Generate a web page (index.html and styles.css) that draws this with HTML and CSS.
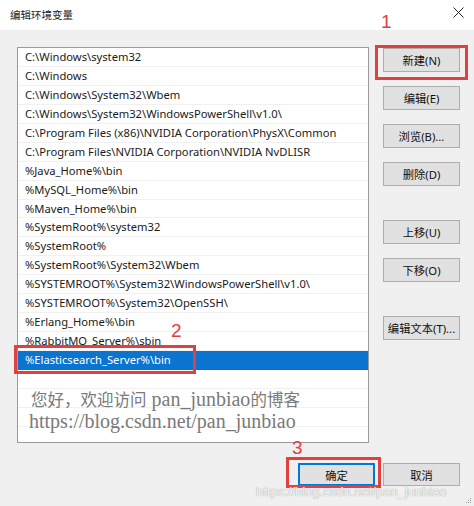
FILE: index.html
```html
<!DOCTYPE html>
<html lang="zh-CN">
<head>
<meta charset="utf-8">
<title>编辑环境变量</title>
<link rel="stylesheet" href="styles.css">
</head>
<body>
<div class="window">
  <div class="titlebar">
    <span class="title">编辑环境变量</span>
    <svg class="close" width="11" height="11" viewBox="0 0 11 11"><path d="M0.5 0.5L10.5 10.5M10.5 0.5L0.5 10.5" stroke="#222" stroke-width="1" fill="none"/></svg>
  </div>
  <div class="content">
    <div class="list">
      <div class="row">C:\Windows\system32</div>
      <div class="row">C:\Windows</div>
      <div class="row">C:\Windows\System32\Wbem</div>
      <div class="row">C:\Windows\System32\WindowsPowerShell\v1.0\</div>
      <div class="row">C:\Program Files (x86)\NVIDIA Corporation\PhysX\Common</div>
      <div class="row">C:\Program Files\NVIDIA Corporation\NVIDIA NvDLISR</div>
      <div class="row">%Java_Home%\bin</div>
      <div class="row">%MySQL_Home%\bin</div>
      <div class="row">%Maven_Home%\bin</div>
      <div class="row">%SystemRoot%\system32</div>
      <div class="row">%SystemRoot%</div>
      <div class="row">%SystemRoot%\System32\Wbem</div>
      <div class="row">%SYSTEMROOT%\System32\WindowsPowerShell\v1.0\</div>
      <div class="row">%SYSTEMROOT%\System32\OpenSSH\</div>
      <div class="row">%Erlang_Home%\bin</div>
      <div class="row">%RabbitMQ_Server%\sbin</div>
      <div class="row selected">%Elasticsearch_Server%\bin</div>
      <div class="row"></div>
      <div class="row"></div>
      <div class="row"></div>
      <div class="row"></div>
      <div class="blogmark">
        <div class="line1"><span class="cjk">您好，欢迎访问</span> pan_junbiao<span class="cjk">的博客</span></div>
        <div>https://blog.csdn.net/pan_junbiao</div>
      </div>
    </div>
    <div class="side">
      <button class="btn">新建(N)</button>
      <button class="btn">编辑(E)</button>
      <button class="btn">浏览(B)...</button>
      <button class="btn">删除(D)</button>
      <button class="btn group">上移(U)</button>
      <button class="btn">下移(O)</button>
      <button class="btn group">编辑文本(T)...</button>
    </div>
  </div>
  <div class="footer">
    <button class="btn default">确定</button>
    <button class="btn">取消</button>
  </div>

  <div class="mark box1"></div>
  <div class="num num1">1</div>
  <div class="mark box2"></div>
  <div class="num num2">2</div>
  <div class="mark box3"></div>
  <div class="num num3">3</div>
  <div class="watermark">https://blog.csdn.net/pan_junbiao</div>
  <svg class="grip" width="6" height="6" viewBox="0 0 6 6"><rect x="4" y="0" width="1" height="1" fill="#999"/><rect x="2" y="2" width="1" height="1" fill="#999"/><rect x="4" y="2" width="1" height="1" fill="#999"/><rect x="0" y="4" width="1" height="1" fill="#999"/><rect x="2" y="4" width="1" height="1" fill="#999"/><rect x="4" y="4" width="1" height="1" fill="#999"/></svg>
</div>
</body>
</html>
```
FILE: styles.css
```css
* { box-sizing: border-box; }
html, body { margin: 0; padding: 0; }
body {
  width: 474px;
  height: 506px;
  overflow: hidden;
  background: #f0f0f0;
  font-family: "Noto Sans", "Noto Sans CJK SC", sans-serif;
  font-size: 12px;
  color: #111;
}
.window {
  position: relative;
  width: 474px;
  height: 506px;
  background: #f0f0f0;
}
.titlebar {
  height: 30px;
  background: #ffffff;
  display: flex;
  align-items: center;
  justify-content: space-between;
  padding: 0 8px 2px 10px;
}
.title {
  font-size: 10.5px;
  color: #222;
}
.close { margin-right: 2px; margin-top: -4px; }
.content {
  display: flex;
  padding: 17px 14px 0 17px;
}
.list {
  position: relative;
  width: 352px;
  height: 396px;
  background: #fff;
  border: 1px solid #9a9a9a;
  overflow: hidden;
}
.row {
  height: 18.94px;
  line-height: 18px;
  padding-left: 7px;
  border-bottom: 1px solid #f1f1f1;
  white-space: nowrap;
  font-size: 11.2px;
  color: #1a1a1a;
}
.row.selected {
  background: #0a74d0;
  color: #fff;
  border-bottom-color: #0a74d0;
}
.blogmark {
  position: absolute;
  left: 11px;
  top: 341px;
  font-family: "Liberation Serif", "Noto Sans CJK SC", serif;
  font-size: 20px;
  line-height: 21px;
  color: #7a7a7a;
  white-space: nowrap;
}
.blogmark .line1 { padding-left: 2px; }
.blogmark .cjk { font-size: 16.5px; }
.side {
  display: flex;
  flex-direction: column;
  margin-left: 14px;
  padding-top: 1px;
}
.btn {
  width: 77px;
  height: 24px;
  margin: 0 0 14px 0;
  padding: 0;
  background: #e1e1e1;
  border: 1px solid #adadad;
  font-family: "Noto Sans", "Noto Sans CJK SC", sans-serif;
  font-size: 11.3px;
  color: #111;
}
.btn.group { margin-top: 20px; }
.footer {
  display: flex;
  justify-content: flex-end;
  gap: 8px;
  padding: 20px 14px 0 0;
}
.footer .btn { margin: 0; height: 23px; }
.btn.default {
  border: 1px solid #0078d7;
  box-shadow: inset 0 0 0 1px #0078d7;
}
.mark {
  position: absolute;
  border: 3px solid #e2403e;
}
.box1 { left: 375px; top: 45px; width: 93px; height: 35px; }
.box2 { left: 14px; top: 345px; width: 182px; height: 29px; }
.box3 { left: 286px; top: 457px; width: 95px; height: 31px; }
.num {
  position: absolute;
  font-family: "Liberation Sans", sans-serif;
  font-size: 19px;
  line-height: 20px;
  color: #e2403e;
}
.num1 { left: 381px; top: 12px; }
.num2 { left: 171px; top: 321px; }
.num3 { left: 292px; top: 438px; }
.watermark {
  position: absolute;
  left: 256px;
  top: 484px;
  font-family: "Liberation Sans", sans-serif;
  font-size: 13px;
  color: rgba(255, 255, 255, 0.85);
  text-shadow: 0 0 1px #b0b0b0, 0 0 1px #b0b0b0;
  white-space: nowrap;
}
.grip { position: absolute; right: 2px; bottom: 2px; }
```
